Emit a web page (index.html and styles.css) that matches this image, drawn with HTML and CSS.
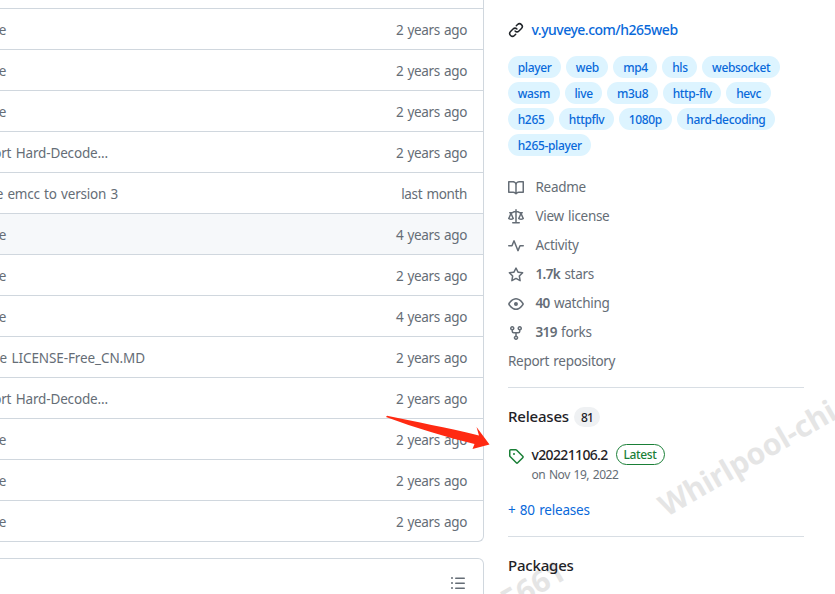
FILE: index.html
```html
<!DOCTYPE html>
<html lang="en">
<head>
    <meta charset="UTF-8">
    <meta name="viewport" content="width=device-width, initial-scale=1.0">
    <title>h265web</title>
    <link rel="stylesheet" href="styles.css">
</head>
<body>
    <div class="page">
        <div class="watermark watermark_top">Whirlpool-chi</div>
        <div class="watermark watermark_bottom">5661</div>
        <div class="content">
            <div class="files">
                <div class="row"><span class="commit">e</span><span class="age">2 years ago</span></div>
                <div class="row"><span class="commit">e</span><span class="age">2 years ago</span></div>
                <div class="row"><span class="commit">e</span><span class="age">2 years ago</span></div>
                <div class="row"><span class="commit commit_decode">ort Hard-Decode...</span><span class="age">2 years ago</span></div>
                <div class="row"><span class="commit commit_emcc">e emcc to version 3</span><span class="age">last month</span></div>
                <div class="row row_active"><span class="commit">e</span><span class="age">4 years ago</span></div>
                <div class="row"><span class="commit">e</span><span class="age">2 years ago</span></div>
                <div class="row"><span class="commit">e</span><span class="age">4 years ago</span></div>
                <div class="row"><span class="commit commit_license">e LICENSE-Free_CN.MD</span><span class="age">2 years ago</span></div>
                <div class="row"><span class="commit commit_decode">ort Hard-Decode...</span><span class="age">2 years ago</span></div>
                <div class="row"><span class="commit">e</span><span class="age">2 years ago</span></div>
                <div class="row"><span class="commit">e</span><span class="age">2 years ago</span></div>
                <div class="row"><span class="commit">e</span><span class="age">2 years ago</span></div>
            </div>
            <div class="readme">
                <svg class="icon" viewBox="0 0 16 16"><path d="M5.75 2.5h8.5a.75.75 0 0 1 0 1.5h-8.5a.75.75 0 0 1 0-1.5Zm0 5h8.5a.75.75 0 0 1 0 1.5h-8.5a.75.75 0 0 1 0-1.5Zm0 5h8.5a.75.75 0 0 1 0 1.5h-8.5a.75.75 0 0 1 0-1.5ZM2 14a1 1 0 1 1 0-2 1 1 0 0 1 0 2Zm1-6a1 1 0 1 1-2 0 1 1 0 0 1 2 0ZM2 4a1 1 0 1 1 0-2 1 1 0 0 1 0 2Z"/></svg>
            </div>
        </div>
        <div class="sidebar">
            <div class="website">
                <svg class="icon" viewBox="0 0 16 16"><path d="m7.775 3.275 1.25-1.25a3.5 3.5 0 1 1 4.95 4.95l-2.5 2.5a3.5 3.5 0 0 1-4.95 0 .751.751 0 0 1 .018-1.042.751.751 0 0 1 1.042-.018 1.998 1.998 0 0 0 2.83 0l2.5-2.5a2.002 2.002 0 0 0-2.83-2.83l-1.25 1.25a.751.751 0 0 1-1.042-.018.751.751 0 0 1-.018-1.042Zm-4.69 9.64a1.998 1.998 0 0 0 2.83 0l1.25-1.25a.751.751 0 0 1 1.042.018.751.751 0 0 1 .018 1.042l-1.25 1.25a3.5 3.5 0 1 1-4.95-4.95l2.5-2.5a3.5 3.5 0 0 1 4.95 0 .751.751 0 0 1-.018 1.042.751.751 0 0 1-1.042.018 1.998 1.998 0 0 0-2.83 0l-2.5 2.5a1.998 1.998 0 0 0 0 2.83Z"/></svg>
                <a href="#">v.yuveye.com/h265web</a>
            </div>
            <div class="topics">
                <a class="topic" href="#">player</a>
                <a class="topic" href="#">web</a>
                <a class="topic" href="#">mp4</a>
                <a class="topic" href="#">hls</a>
                <a class="topic" href="#">websocket</a>
                <a class="topic" href="#">wasm</a>
                <a class="topic" href="#">live</a>
                <a class="topic" href="#">m3u8</a>
                <a class="topic" href="#">http-flv</a>
                <a class="topic" href="#">hevc</a>
                <a class="topic" href="#">h265</a>
                <a class="topic" href="#">httpflv</a>
                <a class="topic" href="#">1080p</a>
                <a class="topic" href="#">hard-decoding</a>
                <a class="topic" href="#">h265-player</a>
            </div>
            <div class="links">
                <div class="link">
                    <svg class="icon" viewBox="0 0 16 16"><path d="M0 1.75A.75.75 0 0 1 .75 1h4.253c1.227 0 2.317.59 3 1.501A3.743 3.743 0 0 1 11.006 1h4.245a.75.75 0 0 1 .75.75v10.5a.75.75 0 0 1-.75.75h-4.507a2.25 2.25 0 0 0-1.591.659l-.622.621a.75.75 0 0 1-1.06 0l-.622-.621A2.25 2.25 0 0 0 5.258 13H.75a.75.75 0 0 1-.75-.75Zm7.251 10.324.004-5.073-.002-2.253A2.25 2.25 0 0 0 5.003 2.5H1.5v9h3.757a3.75 3.75 0 0 1 1.994.574ZM8.755 4.75l-.004 7.322a3.752 3.752 0 0 1 1.992-.572H14.5v-9h-3.495a2.25 2.25 0 0 0-2.25 2.25Z"/></svg>
                    <span>Readme</span>
                </div>
                <div class="link">
                    <svg class="icon" viewBox="0 0 16 16"><path d="M8.75.75V2h.985c.304 0 .603.08.867.231l1.29.736c.038.022.08.033.124.033h2.234a.75.75 0 0 1 0 1.5h-.427l2.111 4.692a.75.75 0 0 1-.154.838l-.53-.53.529.531-.001.002-.002.002-.006.006-.006.005-.01.01-.045.04c-.21.176-.441.327-.686.45C14.556 10.78 13.88 11 13 11a4.498 4.498 0 0 1-2.023-.454 3.544 3.544 0 0 1-.686-.45l-.045-.04-.016-.015-.006-.006-.004-.004v-.001a.75.75 0 0 1-.154-.838L12.178 4.5h-.162c-.305 0-.604-.079-.868-.231l-1.29-.736a.245.245 0 0 0-.124-.033H8.75V13h2.5a.75.75 0 0 1 0 1.5h-6.5a.75.75 0 0 1 0-1.5h2.5V3.5h-.984a.245.245 0 0 0-.124.033l-1.289.737c-.265.15-.564.23-.869.23h-.162l2.112 4.692a.75.75 0 0 1-.154.838l-.53-.53.529.531-.001.002-.002.002-.006.006-.016.015-.045.04c-.21.176-.441.327-.686.45C4.556 10.78 3.88 11 3 11a4.498 4.498 0 0 1-2.023-.454 3.544 3.544 0 0 1-.686-.45l-.045-.04-.016-.015-.006-.006-.004-.004v-.001a.75.75 0 0 1-.154-.838L2.178 4.5H1.75a.75.75 0 0 1 0-1.5h2.234a.249.249 0 0 0 .125-.033l1.288-.737c.265-.15.564-.23.869-.23h.984V.75a.75.75 0 0 1 1.5 0Zm2.945 8.477c.285.135.718.273 1.305.273s1.02-.138 1.305-.273L13 6.327Zm-10 0c.285.135.718.273 1.305.273s1.02-.138 1.305-.273L3 6.327Z"/></svg>
                    <span>View license</span>
                </div>
                <div class="link">
                    <svg class="icon" viewBox="0 0 16 16"><path d="M6 2c.306 0 .582.187.696.471L10 10.731l1.304-3.26A.751.751 0 0 1 12 7h3.25a.75.75 0 0 1 0 1.5h-2.742l-1.812 4.528a.751.751 0 0 1-1.392 0L6 4.77 4.696 8.03A.75.75 0 0 1 4 8.5H.75a.75.75 0 0 1 0-1.5h2.742l1.812-4.529A.751.751 0 0 1 6 2Z"/></svg>
                    <span>Activity</span>
                </div>
                <div class="link">
                    <svg class="icon" viewBox="0 0 16 16"><path d="M8 .25a.75.75 0 0 1 .673.418l1.882 3.815 4.21.612a.75.75 0 0 1 .416 1.279l-3.046 2.97.719 4.192a.751.751 0 0 1-1.088.791L8 12.347l-3.766 1.98a.75.75 0 0 1-1.088-.79l.72-4.194L.818 6.374a.75.75 0 0 1 .416-1.28l4.21-.611L7.327.668A.75.75 0 0 1 8 .25Zm0 2.445L6.615 5.5a.75.75 0 0 1-.564.41l-3.097.45 2.24 2.184a.75.75 0 0 1 .216.664l-.528 3.084 2.769-1.456a.75.75 0 0 1 .698 0l2.77 1.456-.53-3.084a.75.75 0 0 1 .216-.664l2.24-2.183-3.096-.45a.75.75 0 0 1-.564-.41L8 2.694Z"/></svg>
                    <span><b>1.7k</b> stars</span>
                </div>
                <div class="link">
                    <svg class="icon" viewBox="0 0 16 16"><path d="M8 2c1.981 0 3.671.992 4.933 2.078 1.27 1.091 2.187 2.345 2.637 3.023a1.62 1.62 0 0 1 0 1.798c-.45.678-1.367 1.932-2.637 3.023C11.67 13.008 9.981 14 8 14c-1.981 0-3.671-.992-4.933-2.078C1.797 10.83.88 9.576.43 8.898a1.62 1.62 0 0 1 0-1.798c.45-.677 1.367-1.931 2.637-3.022C4.33 2.992 6.019 2 8 2ZM1.679 7.932a.12.12 0 0 0 0 .136c.411.622 1.241 1.75 2.366 2.717C5.176 11.758 6.527 12.5 8 12.5c1.473 0 2.825-.742 3.955-1.715 1.124-.967 1.954-2.096 2.366-2.717a.12.12 0 0 0 0-.136c-.412-.621-1.242-1.75-2.366-2.717C10.824 4.242 9.473 3.5 8 3.5c-1.473 0-2.825.742-3.955 1.715-1.124.967-1.954 2.096-2.366 2.717ZM8 10a2 2 0 1 1-.001-3.999A2 2 0 0 1 8 10Z"/></svg>
                    <span><b>40</b> watching</span>
                </div>
                <div class="link">
                    <svg class="icon" viewBox="0 0 16 16"><path d="M5 5.372v.878c0 .414.336.75.75.75h4.5a.75.75 0 0 0 .75-.75v-.878a2.25 2.25 0 1 1 1.5 0v.878a2.25 2.25 0 0 1-2.25 2.25h-1.5v2.128a2.251 2.251 0 1 1-1.5 0V8.5h-1.5A2.25 2.25 0 0 1 3.5 6.25v-.878a2.25 2.25 0 1 1 1.5 0ZM5 3.25a.75.75 0 1 0-1.5 0 .75.75 0 0 0 1.5 0Zm6.75.75a.75.75 0 1 0 0-1.5.75.75 0 0 0 0 1.5Zm-3 8.75a.75.75 0 1 0-1.5 0 .75.75 0 0 0 1.5 0Z"/></svg>
                    <span><b>319</b> forks</span>
                </div>
                <div class="link">Report repository</div>
            </div>
            <div class="releases">
                <h2>Releases <span class="counter">81</span></h2>
                <div class="release">
                    <svg class="icon" viewBox="0 0 16 16"><path d="M1 7.775V2.75C1 1.784 1.784 1 2.75 1h5.025c.464 0 .91.184 1.238.513l6.25 6.25a1.75 1.75 0 0 1 0 2.474l-5.026 5.026a1.75 1.75 0 0 1-2.474 0l-6.25-6.25A1.752 1.752 0 0 1 1 7.775Zm1.5 0c0 .066.026.13.073.177l6.25 6.25a.25.25 0 0 0 .354 0l5.025-5.025a.25.25 0 0 0 0-.354l-6.25-6.25a.25.25 0 0 0-.177-.073H2.75a.25.25 0 0 0-.25.25ZM6 5a1 1 0 1 1 0 2 1 1 0 0 1 0-2Z"/></svg>
                    <div>
                        <div class="release_title"><span class="version">v20221106.2</span><span class="latest">Latest</span></div>
                        <div class="date">on Nov 19, 2022</div>
                    </div>
                </div>
                <a class="more" href="#">+ 80 releases</a>
            </div>
            <div class="packages">
                <h2>Packages</h2>
            </div>
        </div>
        <svg class="arrow" viewBox="0 0 106 36"><path d="M0 2 1 .8C30 7 60 12.500 93 20.500L90.500 12 103.500 29.500 86.500 34 88.500 29C60 22 30 13 0 2Z"/></svg>
    </div>
</body>
</html>
```
FILE: styles.css
```css
*{
    margin: 0;
    padding: 0;
    box-sizing: border-box;
}
body {
    font-family: "Noto Sans", "Liberation Sans", sans-serif;
    font-size: 13.5px;
    line-height: 21px;
    letter-spacing: -0.3px;
    word-spacing: 1px;
    color: #1f2328;
    background-color: #fff;
}
a {
    text-decoration: none;
    color: #0969da;
}
.page {
    position: relative;
    display: flex;
    width: 835px;
    height: 594px;
    overflow: hidden;
}
.content {
    width: 484px;
    flex-shrink: 0;
}
.files {
    border: 1px solid #d0d7de;
    border-top: none;
    border-left: none;
    border-radius: 0 0 6px 0;
    padding-top: 8px;
}
.row {
    display: flex;
    justify-content: space-between;
    height: 41px;
    padding: 11px 16px 0 0;
    border-top: 1px solid #d0d7de;
    color: #656d76;
}
.row_active {
    background-color: #f6f8fa;
}
.age {
    letter-spacing: -0.35px;
}
/* commit messages run out of the left edge, only the tail is seen */
.commit {
    display: flex;
    justify-content: flex-end;
    width: 6px;
    white-space: nowrap;
}
.commit_decode {
    width: 108px;
    letter-spacing: -0.15px;
}
.commit_emcc {
    width: 118px;
    letter-spacing: -0.2px;
}
.commit_license {
    width: 145px;
    letter-spacing: -0.1px;
}
.readme {
    display: flex;
    justify-content: flex-end;
    height: 60px;
    margin-top: 16px;
    padding: 16px 17px 0 0;
    border: 1px solid #d0d7de;
    border-left: none;
    border-radius: 0 6px 0 0;
    color: #656d76;
}
.icon {
    display: block;
    flex-shrink: 0;
    width: 16px;
    height: 16px;
    fill: currentColor;
}
.sidebar {
    position: relative;
    width: 296px;
    margin-left: 24px;
    flex-shrink: 0;
}
.website {
    display: flex;
    align-items: center;
    gap: 7.5px;
    margin-top: 19px;
    font-size: 14px;
    font-weight: 550;
    letter-spacing: -0.5px;
}
.topics {
    display: flex;
    flex-wrap: wrap;
    gap: 4px 5px;
    width: 284px;
    margin-top: 16px;
}
.topic {
    height: 22px;
    padding: 0 9.7px;
    border-radius: 11px;
    background-color: #ddf4ff;
    font-size: 12px;
    line-height: 24px;
    letter-spacing: -0.35px;
    font-weight: 500;
}
.links {
    margin-top: 21px;
    color: #656d76;
}
.link {
    display: flex;
    align-items: center;
    gap: 11.5px;
    height: 21px;
    margin-bottom: 8px;
}
.link span {
    line-height: 19px;
}
.link b {
    font-weight: 600;
    letter-spacing: -0.6px;
}
.releases {
    margin-top: 15px;
    padding-top: 16px;
    height: 149px;
    border-top: 1px solid #d8dee4;
}
h2 {
    display: flex;
    align-items: center;
    gap: 5px;
    font-size: 15px;
    line-height: 25px;
    letter-spacing: -0.2px;
    font-weight: 500;
}
.counter {
    height: 20px;
    padding: 0 7px;
    border-radius: 10px;
    background-color: #eff1f3;
    font-size: 12px;
    line-height: 21px;
    letter-spacing: -0.7px;
}
.release {
    display: flex;
    gap: 7.5px;
    margin-top: 15px;
}
.release .icon {
    margin-top: 4px;
    color: #1a7f37;
}
.release_title {
    display: flex;
    align-items: center;
    gap: 8px;
    height: 21px;
    font-size: 14px;
    font-weight: 500;
}
.version {
    width: 76px;
    letter-spacing: -0.65px;
}
.latest {
    height: 21px;
    padding: 0 7px;
    border: 1px solid #1a7f37;
    border-radius: 11px;
    font-size: 12px;
    line-height: 20px;
    letter-spacing: -0.35px;
    color: #1a7f37;
}
.date {
    height: 18px;
    font-size: 12px;
    line-height: 20px;
    letter-spacing: -0.45px;
    color: #656d76;
}
.more {
    display: block;
    margin-top: 17px;
    letter-spacing: -0.2px;
}
.packages {
    padding-top: 16px;
    border-top: 1px solid #d8dee4;
}
.watermark {
    position: absolute;
    font-size: 30px;
    line-height: 40px;
    letter-spacing: 0;
    font-weight: 700;
    color: #e5e5e5;
    white-space: nowrap;
    transform-origin: 0 100%;
    transform: rotate(-30deg);
}
.watermark_top {
    left: 671px;
    top: 485px;
}
.watermark_bottom {
    left: 513px;
    top: 580px;
}
.arrow {
    position: absolute;
    left: 386px;
    top: 415px;
    width: 106px;
    height: 36px;
    fill: #ff2a12;
}
```
